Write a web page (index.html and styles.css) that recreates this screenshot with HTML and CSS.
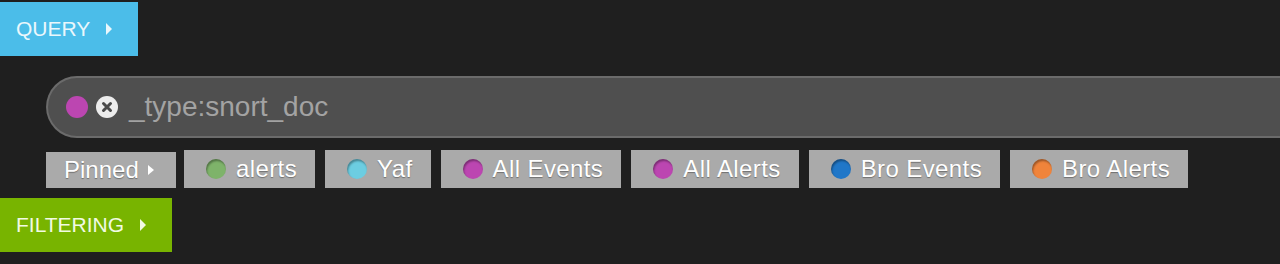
FILE: index.html
```html
<!DOCTYPE html>
<html>
<head>
<meta charset="utf-8">
<link rel="stylesheet" href="styles.css">
</head>
<body>
<div class="page">
  <div class="section-btn query">QUERY <span class="tri"></span></div>
  <div class="search">
    <span class="sdot purple"></span>
    <span class="clear">
      <svg width="22" height="22" viewBox="0 0 22 22"><circle cx="11" cy="11" r="11" fill="#ececec"/><path d="M7.5 7.5 L14.5 14.5 M14.5 7.5 L7.5 14.5" stroke="#4a4a4a" stroke-width="3" stroke-linecap="round"/></svg>
    </span>
    <span class="query-text">_type:snort_doc</span>
  </div>
  <div class="pills">
    <div class="pill pinned"><span class="pin-label">Pinned</span><span class="tri small"></span></div>
    <div class="pill"><span class="dot green"></span>alerts</div>
    <div class="pill"><span class="dot cyan"></span>Yaf</div>
    <div class="pill"><span class="dot purple"></span>All Events</div>
    <div class="pill"><span class="dot purple"></span>All Alerts</div>
    <div class="pill"><span class="dot blue"></span>Bro Events</div>
    <div class="pill"><span class="dot orange"></span>Bro Alerts</div>
  </div>
  <div class="section-btn filtering">FILTERING <span class="tri"></span></div>
</div>
</body>
</html>
```
FILE: styles.css
```css
html, body {
  margin: 0;
  padding: 0;
  background: #1f1f1f;
  overflow: hidden;
  font-family: "Liberation Sans", Arial, sans-serif;
}
.page {
  padding-top: 2px;
  display: flex;
  flex-direction: column;
  align-items: flex-start;
}
.section-btn {
  height: 54px;
  display: flex;
  align-items: center;
  padding: 0 0 0 16px;
  font-size: 21px;
  color: #eaf7fc;
  box-sizing: border-box;
}
.section-btn .tri {
  margin-left: 16px;
  width: 0;
  height: 0;
  border-left: 6px solid currentColor;
  border-top: 6px solid transparent;
  border-bottom: 6px solid transparent;
}
.query {
  background: #4bbde9;
  width: 138px;
}
.filtering {
  background: #78b400;
  color: #f1fae3;
  width: 172px;
  margin-top: 10px;
}
.search {
  margin-top: 20px;
  margin-left: 46px;
  width: 1234px;
  height: 62px;
  box-sizing: border-box;
  border: 2px solid #6b6b6b;
  border-right: none;
  border-radius: 31px 0 0 31px;
  background: #4f4f4f;
  display: flex;
  align-items: center;
  padding-left: 18px;
}
.sdot {
  width: 22px;
  height: 22px;
  border-radius: 50%;
}
.clear {
  margin-left: 8px;
  display: flex;
}
.query-text {
  margin-left: 11px;
  font-size: 28px;
  color: #a3a3a3;
}
.pills {
  margin-top: 12px;
  margin-left: 46px;
  display: flex;
  align-items: flex-end;
  gap: 10px;
}
.pill {
  height: 38px;
  background: #aaaaaa;
  color: #ffffff;
  font-size: 24px;
  letter-spacing: 0.4px;
  display: flex;
  align-items: center;
  padding: 0 18px 0 22px;
  box-sizing: border-box;
  text-shadow: 0 1px 1px rgba(0,0,0,0.35);
}
.pill.pinned {
  height: 36px;
  width: 130px;
  padding: 0 0 0 18px;
  margin-right: -2px;
  letter-spacing: 0;
}
.pill .tri.small {
  margin-left: 9px;
  width: 0;
  height: 0;
  border-left: 6px solid #ffffff;
  border-top: 5.5px solid transparent;
  border-bottom: 5.5px solid transparent;
}
.dot {
  width: 20px;
  height: 20px;
  border-radius: 50%;
  margin-right: 10px;
  box-shadow: inset 1px 2px 2px rgba(0,0,0,0.35);
}
.purple { background: #bc46b1; }
.green { background: #7eb36a; }
.cyan { background: #6ccde1; }
.blue { background: #2077c8; }
.orange { background: #f0843b; }
```
